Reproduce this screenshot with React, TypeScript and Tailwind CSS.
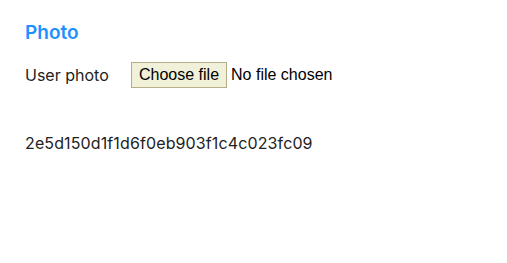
import React from "react";

export default function App() {
  return (
    <div className="w-[507px] h-[263px] bg-white pl-[25px] pt-[21px] font-['Inter',sans-serif] text-[#222]">
      <h2 className="text-[19px] leading-[24px] font-semibold text-[#1e90ff]">Photo</h2>
      <div className="mt-[17px] flex items-center h-[26px] text-[16px] leading-[20px]">
        <span className="w-[106px]">User photo</span>
        <label className="flex items-center font-['Liberation_Sans',Arial,sans-serif]">
          <span className="h-[26px] px-[7px] flex items-center border border-[#b5ae88] bg-[#f1f0d9] text-[16px] text-black">Choose file</span>
          <span className="ml-[4px] text-[16px] text-black">No file chosen</span>
          <input type="file" className="hidden" />
        </label>
      </div>
      <div className="mt-[45px] text-[16px] leading-[20px] tracking-[0.12px]">2e5d150d1f1d6f0eb903f1c4c023fc09</div>
    </div>
  );
}
